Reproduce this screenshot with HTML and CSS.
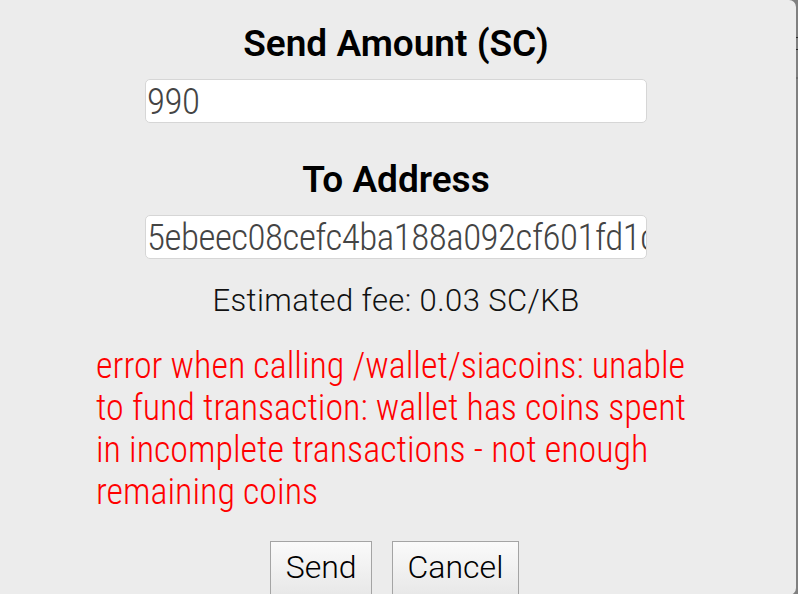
FILE: index.html
```html
<!DOCTYPE html>
<html lang="en">
<head>
<meta charset="utf-8">
<title>Send Siacoin</title>
<link rel="stylesheet" href="styles.css">
</head>
<body>
  <div class="modal">
    <h2 class="label label-amount">Send Amount (SC)</h2>
    <input class="field" type="text" value="990">
    <h2 class="label label-address">To Address</h2>
    <input class="field" type="text" value="5ebeec08cefc4ba188a092cf601fd1c3e2b5a8f0d7c4e91b6a2f3d08c7e5b14a9d6f2e0c81ab">
    <p class="fee">Estimated fee: 0.03 SC/KB</p>
    <p class="error">error when calling /wallet/siacoins: unable to fund transaction: wallet has coins spent in incomplete transactions - not enough remaining coins</p>
    <div class="actions">
      <button class="btn" type="button">Send</button>
      <button class="btn" type="button">Cancel</button>
    </div>
  </div>
</body>
</html>
```

FILE: styles.css
```css
html, body {
  margin: 0;
  height: 100%;
  overflow: hidden;
}

body {
  font-family: "Roboto", "Noto Sans", sans-serif;
  background: linear-gradient(to bottom,
    #808080 0 37px, #2a2a2a 37px 38px,
    #808080 38px 49px, #2a2a2a 49px 50px,
    #808080 50px 77px, #6c6c6c 77px 79px,
    #808080 79px);
}

.modal {
  width: 796px;
  height: 595px;
  box-sizing: border-box;
  padding-right: 4px;
  background: #ececec;
  border-radius: 0 7px 7px 0;
  display: flex;
  flex-direction: column;
  align-items: center;
}

.label {
  margin: 0;
  font-size: 37px;
  font-weight: 600;
  line-height: 42px;
  color: #000;
}

.label-amount {
  margin-top: 23px;
}

.label-address {
  margin-top: 36px;
}

.field {
  margin-top: 14px;
  width: 502px;
  height: 44px;
  box-sizing: border-box;
  padding: 0 0 0 1px;
  border: 1px solid #d6d6d6;
  border-radius: 5px;
  background: #fff;
  font-family: "Roboto", sans-serif;
  font-stretch: 75%;
  font-weight: 300;
  font-size: 37px;
  letter-spacing: -0.5px;
  color: #444;
  outline: none;
}

.fee {
  margin: 24px 0 0;
  font-size: 31px;
  font-weight: 300;
  font-stretch: 93%;
  letter-spacing: 0.4px;
  line-height: 36px;
  color: #111;
}

.error {
  margin: 26px 0 0;
  width: 600px;
  font-size: 36px;
  font-weight: 300;
  font-stretch: 75%;
  line-height: 42px;
  color: #ff0000;
}

.actions {
  margin: 28px 3px 0 0;
  display: flex;
  gap: 20px;
}

.btn {
  height: 60px;
  padding: 0 14.5px 8px;
  border: 1px solid #a4a4a4;
  border-radius: 0;
  background: linear-gradient(to bottom, #fafafa, #e6e6e6);
  font-family: "Roboto", sans-serif;
  font-stretch: 88%;
  font-size: 32px;
  font-weight: 300;
  color: #000;
}
```
